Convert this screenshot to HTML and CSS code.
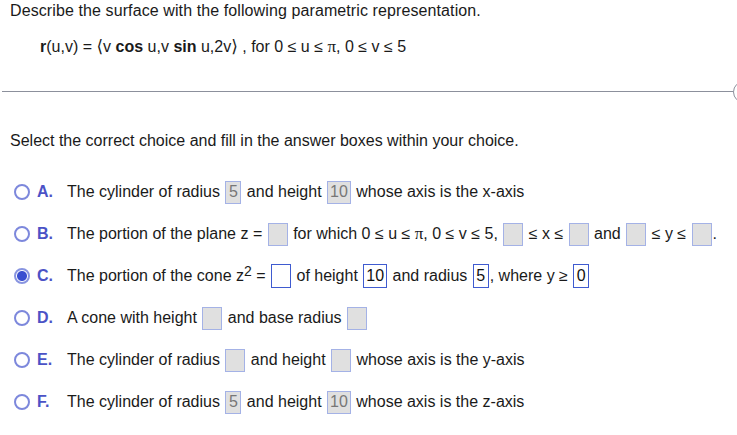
FILE: index.html
```html
<!DOCTYPE html>
<html lang="en">
<head>
    <meta charset="UTF-8">
    <title>Parametric Surface Question</title>
    <link rel="stylesheet" href="styles.css">
</head>
<body>
    <div class="question">
        <p class="prompt">Describe the surface with the following parametric representation.</p>
        <p class="equation"><b>r</b>(u,v) = <span class="angle">&#10216;</span>v <b>cos</b> u,v <b>sin</b> u,2v<span class="angle">&#10217;</span> , for 0 &le; u &le; <span class="pi">&pi;</span>, 0 &le; v &le; 5</p>
    </div>

    <div class="divider">
        <span class="handle"></span>
    </div>

    <p class="instructions">Select the correct choice and fill in the answer boxes within your choice.</p>

    <div class="choices">
        <div class="choice">
            <span class="radio"></span>
            <span class="letter">A.</span>
            <span class="text">The cylinder of radius <span class="box filled">5</span> and height <span class="box filled">10</span> whose axis is the x-axis</span>
        </div>
        <div class="choice">
            <span class="radio"></span>
            <span class="letter">B.</span>
            <span class="text">The portion of the plane z = <span class="box empty"></span> for which 0 &le; u &le; <span class="pi">&pi;</span>, 0 &le; v &le; 5, <span class="box empty"></span> &le; x &le; <span class="box empty"></span> and <span class="box empty"></span> &le; y &le; <span class="box empty"></span>.</span>
        </div>
        <div class="choice">
            <span class="radio checked"></span>
            <span class="letter">C.</span>
            <span class="text">The portion of the cone z<sup>2</sup> = <span class="box active wide"></span> of height <span class="box active">10</span> and radius <span class="box active">5</span>, where y &ge; <span class="box active">0</span></span>
        </div>
        <div class="choice">
            <span class="radio"></span>
            <span class="letter">D.</span>
            <span class="text">A cone with height <span class="box empty"></span> and base radius <span class="box empty"></span></span>
        </div>
        <div class="choice">
            <span class="radio"></span>
            <span class="letter">E.</span>
            <span class="text">The cylinder of radius <span class="box empty"></span> and height <span class="box empty"></span> whose axis is the y-axis</span>
        </div>
        <div class="choice">
            <span class="radio"></span>
            <span class="letter">F.</span>
            <span class="text">The cylinder of radius <span class="box filled">5</span> and height <span class="box filled">10</span> whose axis is the z-axis</span>
        </div>
    </div>
</body>
</html>
```

FILE: styles.css
```css
* {
    margin: 0;
    padding: 0;
    box-sizing: border-box;
}

body {
    font-family: "Liberation Sans", Arial, sans-serif;
    font-size: 16px;
    color: #1a1a1a;
    background: #fff;
    overflow: hidden;
}

.prompt {
    line-height: 22px;
    padding-left: 10px;
    letter-spacing: 0.1px;
}

.equation {
    line-height: 22px;
    margin-top: 13px;
    padding-left: 40px;
}

.angle {
    font-family: "DejaVu Sans", sans-serif;
    font-size: 17px;
}

.pi {
    font-family: "Liberation Serif", "Times New Roman", serif;
    font-size: 17px;
}

.divider {
    position: relative;
    margin: 33px 4px 0 2px;
    height: 1px;
    background: #8c909c;
}

.divider .handle {
    position: absolute;
    right: -22px;
    top: -10px;
    width: 22px;
    height: 22px;
    border: 1px solid #8c909c;
    border-radius: 50%;
    background: #fff;
}

.instructions {
    line-height: 22px;
    margin-top: 38px;
    padding-left: 10px;
}

.choices {
    margin-top: 19px;
    display: flex;
    flex-direction: column;
}

.choice {
    display: flex;
    align-items: center;
    height: 42px;
    padding-left: 14px;
    white-space: nowrap;
}

.radio {
    width: 16px;
    height: 16px;
    border: 2px solid #7d88dc;
    border-radius: 50%;
    flex-shrink: 0;
}

.radio.checked {
    border-color: #8894e0;
    background: radial-gradient(circle, #3a4fd0 0 4.5px, #fff 5.5px);
}

.letter {
    width: 30px;
    margin-left: 7px;
    font-weight: bold;
    color: #4b52c6;
}

.text {
    display: flex;
    align-items: center;
    white-space: pre;
}

.text sup {
    font-size: 14px;
    position: relative;
    top: -5px;
    line-height: 1;
}

.box {
    display: inline-flex;
    align-items: center;
    justify-content: center;
    height: 23px;
    min-width: 16px;
    padding: 0 2px;
    margin: 0 1px;
    border: 1px solid #a4b2e6;
    background: #e0e0e0;
    color: #777;
}

.box.empty {
    width: 20px;
}

.box.active {
    border-color: #3f5bd0;
    background: #fff;
    color: #111;
    height: 24px;
}

.box.active.wide {
    width: 20px;
}
```
